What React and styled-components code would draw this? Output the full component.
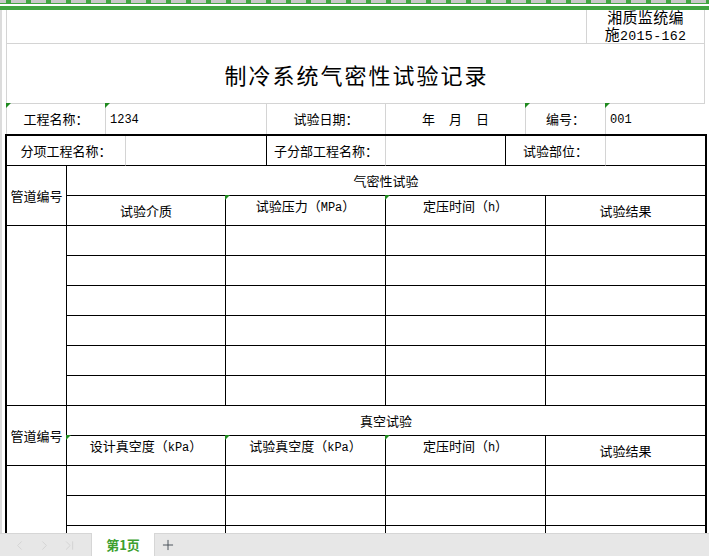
import React from 'react';
import styled, { createGlobalStyle } from 'styled-components';
import { ChevronLeft, ChevronRight, ChevronLast, Plus } from 'lucide-react';

const GREY = '#d4d4d4';
const BLACK = '#000';
const GREEN = '#41a541';

const GlobalStyle = createGlobalStyle`
  html, body {
    margin: 0;
    padding: 0;
    background: #fff;
    overflow: hidden;
  }
  body {
    font-family: "Noto Sans CJK SC", "Noto Sans", sans-serif;
    color: #000;
  }
`;

const Screen = styled.div`
  width: 709px;
  height: 556px;
  display: flex;
  flex-direction: column;
  overflow: hidden;
`;

const TopStrip = styled.div`
  height: 3px;
  background: repeating-linear-gradient(
    90deg,
    #c9c9c9 0 6px,
    ${GREEN} 6px 11px,
    #c9c9c9 11px 20px
  );
`;

const GreenRule = styled.div`
  height: ${p => p.$h}px;
  background: ${GREEN};
  margin-bottom: ${p => p.$gap || 0}px;
`;

const SheetArea = styled.div`
  flex: 1;
  overflow: hidden;
  border-left: 2px solid #dcdcdc;
`;

// column widths between the sheet's ruled lines
const COLS = '60px 39px 20px 100px 41px 119px 120px 20px 20px 41px 19px 99px';

const HeaderGrid = styled.div`
  display: grid;
  grid-template-columns: ${COLS};
  grid-template-rows: 34px 60px 30px;
  margin-left: 4px;
  border-left: 1px solid ${GREY};
  width: 698px;
`;

const MainGrid = styled.div`
  display: grid;
  grid-template-columns: ${COLS};
  grid-template-rows: repeat(15, 30px);
  margin-left: 3px;
  width: 698px;
  border-left: 2px solid ${BLACK};
  border-right: 2px solid ${BLACK};
  border-top: 2px solid ${BLACK};
`;

const line = kind =>
  kind === 'black' ? `1px solid ${BLACK}` : kind === 'grey' ? `1px solid ${GREY}` : 'none';

const CellBox = styled.div`
  position: relative;
  box-sizing: border-box;
  grid-column: ${p => p.$col};
  grid-row: ${p => p.$row};
  border-right: ${p => line(p.$r)};
  border-bottom: ${p => line(p.$b)};
  display: flex;
  justify-content: ${p => (p.$left ? 'flex-start' : 'center')};
  align-items: ${p => (p.$top ? 'flex-start' : 'center')};
  padding-top: ${p => (p.$top ? 2 : 0)}px;
  padding-left: ${p => (p.$left ? 4 : 0)}px;
  font-size: ${p => p.$size || 13}px;
  line-height: 16px;
  white-space: nowrap;

  ${p =>
    p.$mark &&
    `
    &::before {
      content: '';
      position: absolute;
      left: -1px;
      top: -1px;
      width: 0;
      height: 0;
      border-top: 5px solid #1f8a1f;
      border-right: 5px solid transparent;
    }
  `}
`;

const Cell = ({ children, ...rest }) => (
  <CellBox {...rest}>{children != null && <span>{children}</span>}</CellBox>
);

const Title = styled.span`
  font-size: 22px;
  font-weight: 400;
  letter-spacing: 2px;
  margin-left: 2px;
`;

const CodeBlock = styled.div`
  text-align: center;
  font-size: 15px;
  line-height: 17px;
  letter-spacing: 0.3px;
`;

const Mono = styled.span`
  font-family: "Liberation Mono", "Noto Sans CJK SC", monospace;
  font-size: ${p => p.$size || 12}px;
`;

const DateText = styled.span`
  & > span {
    margin: 0 14px;
  }
`;

const TabBar = styled.div`
  height: 22px;
  flex: none;
  background: #e7e7e7;
  border-top: 1px solid #d6d6d6;
  display: flex;
  align-items: stretch;
`;

const NavGroup = styled.div`
  width: 91px;
  display: flex;
  align-items: center;
  gap: 10px;
  padding-left: 12px;
  box-sizing: border-box;
  color: #cfcfcf;
`;

const SheetTab = styled.div`
  width: 62px;
  margin-top: -1px;
  background: #fff;
  border-left: 1px solid #d6d6d6;
  border-right: 1px solid #d6d6d6;
  display: flex;
  align-items: center;
  justify-content: center;
  font-size: 13px;
  font-weight: 700;
  color: #3d9f2f;
`;

const AddButton = styled.div`
  width: 26px;
  display: flex;
  align-items: center;
  justify-content: center;
  color: #444b55;
`;

const DataRows = ({ start, count }) => {
  const rows = [];
  for (let i = 0; i < count; i++) {
    const r = start + i;
    rows.push(
      <React.Fragment key={r}>
        <Cell $col="2 / 5" $row={r} $r="black" $b="black" />
        <Cell $col="5 / 7" $row={r} $r="black" $b="black" />
        <Cell $col="7 / 10" $row={r} $r="black" $b="black" />
        <Cell $col="10 / 13" $row={r} $b="black" />
      </React.Fragment>
    );
  }
  return (
    <>
      <Cell $col="1 / 2" $row={`${start} / span ${count}`} $r="black" $b="black" />
      {rows}
    </>
  );
};

export default function App() {
  return (
    <Screen>
      <GlobalStyle />
      <TopStrip />
      <GreenRule $h={1} $gap={2} />
      <GreenRule $h={4} />
      <SheetArea>
        <HeaderGrid>
          <Cell $col="1 / 11" $row="1" $r="grey" $b="grey" />
          <CellBox $col="11 / 13" $row="1" $r="grey" $b="grey">
            <CodeBlock>
              湘质监统编
              <br />
              施<Mono $size={13.3}>2015-162</Mono>
            </CodeBlock>
          </CellBox>
          <CellBox $col="1 / 13" $row="2" $r="grey" $b="grey">
            <Title>制冷系统气密性试验记录</Title>
          </CellBox>

          <Cell $col="1 / 3" $row="3" $r="grey" $mark>
            工程名称：
          </Cell>
          <Cell $col="3 / 6" $row="3" $r="grey" $left $mark>
            <Mono>1234</Mono>
          </Cell>
          <Cell $col="6 / 7" $row="3" $r="grey">
            试验日期：
          </Cell>
          <Cell $col="7 / 9" $row="3" $r="grey">
            <DateText>
              年<span>月</span>日
            </DateText>
          </Cell>
          <Cell $col="9 / 12" $row="3" $r="grey" $mark>
            编号：
          </Cell>
          <Cell $col="12 / 13" $row="3" $left $mark>
            <Mono>001</Mono>
          </Cell>
        </HeaderGrid>

        <MainGrid>
          <Cell $col="1 / 4" $row="1" $r="grey" $b="black">
            分项工程名称：
          </Cell>
          <Cell $col="4 / 6" $row="1" $r="black" $b="black" />
          <Cell $col="6 / 7" $row="1" $r="grey" $b="black">
            子分部工程名称：
          </Cell>
          <Cell $col="7 / 8" $row="1" $r="black" $b="black" />
          <Cell $col="8 / 12" $row="1" $r="grey" $b="black">
            试验部位：
          </Cell>
          <Cell $col="12 / 13" $row="1" $b="black" />

          <Cell $col="1 / 2" $row="2 / 4" $r="black" $b="black">
            管道编号
          </Cell>
          <Cell $col="2 / 13" $row="2" $b="black">
            气密性试验
          </Cell>
          <Cell $col="2 / 5" $row="3" $r="black" $b="black">
            试验介质
          </Cell>
          <Cell $col="5 / 7" $row="3" $r="black" $b="black" $top $mark>
            试验压力（<Mono>MPa</Mono>）
          </Cell>
          <Cell $col="7 / 10" $row="3" $r="black" $b="black" $top $mark>
            定压时间（<Mono>h</Mono>）
          </Cell>
          <Cell $col="10 / 13" $row="3" $b="black">
            试验结果
          </Cell>

          <DataRows start={4} count={6} />

          <Cell $col="1 / 2" $row="10 / 12" $r="black" $b="black">
            管道编号
          </Cell>
          <Cell $col="2 / 13" $row="10" $b="black">
            真空试验
          </Cell>
          <Cell $col="2 / 5" $row="11" $r="black" $b="black" $top $mark>
            设计真空度（<Mono>kPa</Mono>）
          </Cell>
          <Cell $col="5 / 7" $row="11" $r="black" $b="black" $top $mark>
            试验真空度（<Mono>kPa</Mono>）
          </Cell>
          <Cell $col="7 / 10" $row="11" $r="black" $b="black" $top $mark>
            定压时间（<Mono>h</Mono>）
          </Cell>
          <Cell $col="10 / 13" $row="11" $b="black">
            试验结果
          </Cell>

          <DataRows start={12} count={4} />
        </MainGrid>
      </SheetArea>
      <TabBar>
        <NavGroup>
          <ChevronLeft size={15} strokeWidth={1.3} />
          <ChevronRight size={15} strokeWidth={1.3} />
          <ChevronLast size={15} strokeWidth={1.3} />
        </NavGroup>
        <SheetTab>第1页</SheetTab>
        <AddButton>
          <Plus size={16} strokeWidth={1.4} />
        </AddButton>
      </TabBar>
    </Screen>
  );
}
